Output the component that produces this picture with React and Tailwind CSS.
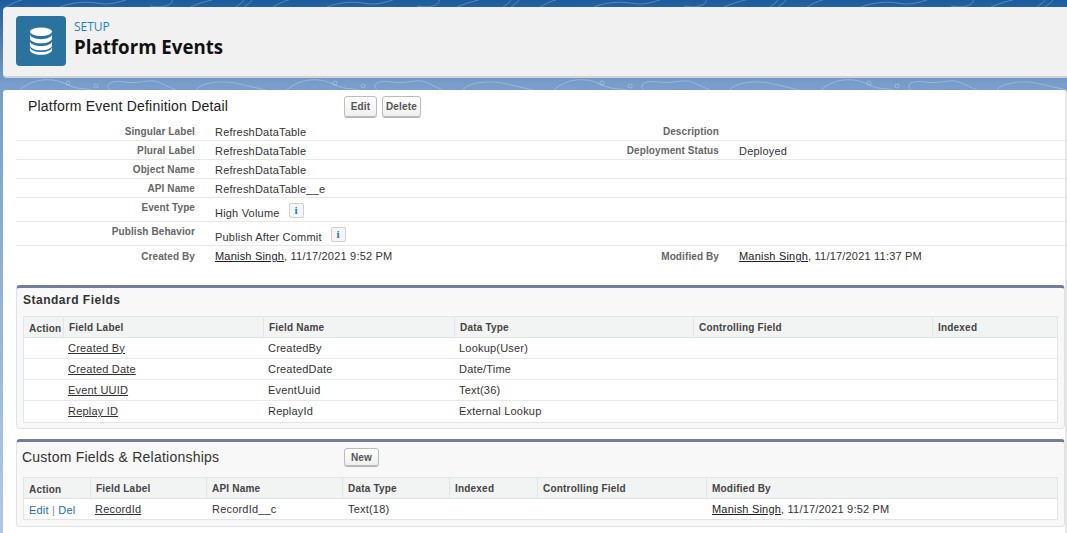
const detailRows = [
  { h: "h-[19px]", label: "Singular Label", value: "RefreshDataTable", label2: "Description" },
  { h: "h-[19px]", label: "Plural Label", value: "RefreshDataTable", label2: "Deployment Status", value2: "Deployed" },
  { h: "h-[19px]", label: "Object Name", value: "RefreshDataTable" },
  { h: "h-[19px]", label: "API Name", value: "RefreshDataTable__e" },
  { h: "h-[24px]", label: "Event Type", value: "High Volume", info: true },
  { h: "h-[24px]", label: "Publish Behavior", value: "Publish After Commit", info: true },
];

const detailCols = "grid-cols-[179px_20px_280px_224px_20px_1fr]";
const standardCols = "grid-cols-[40px_200px_191px_239px_239px_1fr]";
const customCols = "grid-cols-[67px_116px_136px_107px_88px_169px_1fr]";

const standardHead = ["Action", "Field Label", "Field Name", "Data Type", "Controlling Field", "Indexed"];
const standardRows = [
  ["Created By", "CreatedBy", "Lookup(User)"],
  ["Created Date", "CreatedDate", "Date/Time"],
  ["Event UUID", "EventUuid", "Text(36)"],
  ["Replay ID", "ReplayId", "External Lookup"],
];
const customHead = ["Action", "Field Label", "API Name", "Data Type", "Indexed", "Controlling Field", "Modified By"];

function Topo({ className }) {
  return (
    <svg className={className} viewBox="0 0 1067 100" fill="none" stroke="#fff" strokeOpacity="0.25" strokeWidth="1">
      {[0, 267, 534, 801].map((x) => (
        <g key={x} transform={`translate(${x} 0)`}>
          <path d="M20 90c10-10 30-14 46-6s20 2 30 8" />
          <path d="M60 7c10-4 24-6 36-4s16 1 30-3" />
          <circle cx="68" cy="83" r="2" />
          <path d="M110 90c-6-6 2-10 14-8s24-2 30-1 10 4 22 9" />
          <path d="M190 7c8-3 12-5 22-7" />
          <path d="M196 90c2-4 12-8 26-8s20 3 44 8" />
          <path d="M150 6c6 1 14 2 20-2 3-2 2-3 2-4" />
          <circle cx="96" cy="86" r="2" />
          <path d="M6 7c6-3 8-5 16-7" />
          <path d="M236 7c4-3 6-4 8-7M244 7c4-3 6-4 8-7" />
        </g>
      ))}
    </svg>
  );
}

function Btn({ children, className = "" }) {
  return (
    <button
      type="button"
      className={`rounded-[3px] border border-[#bcbcbc] bg-gradient-to-b from-white to-[#efefef] pt-[2px] text-[10px] font-bold leading-none tracking-[0.2px] text-[#555] shadow-[0_1px_0_#b5b5b5] ${className}`}
    >
      {children}
    </button>
  );
}

function Info() {
  return (
    <span className="inline-flex h-[15px] w-[15px] items-center justify-center rounded-[2px] border border-[#d0d0d0] bg-[#f6f6f6] font-['Liberation_Serif',serif] text-[11px] font-bold leading-none text-[#1a73d9]">
      i
    </span>
  );
}

function Person({ children }) {
  return (
    <>
      <a className="text-[#222] underline">Manish Singh</a>
      {children}
    </>
  );
}

function Cell({ children, className = "pl-[5px]" }) {
  return <div className={`truncate ${className}`}>{children}</div>;
}

function HeadRow({ cols, items }) {
  return (
    <div className={`grid h-[21px] items-center border-b border-[#dfe3e3] bg-[#f2f3f3] text-[10px] font-bold tracking-[0.2px] text-[#444] ${cols}`}>
      {items.map((t, i) => (
        <div
          key={t}
          className={`flex h-full items-center pl-[5px] ${i === 0 ? "pt-[2px]" : ""} ${i < items.length - 1 ? "border-r border-[#e3e6e6]" : ""}`}
        >
          {t}
        </div>
      ))}
    </div>
  );
}

function Section({ className = "", children }) {
  return (
    <section className={`ml-[13px] rounded-[4px] border border-t-[3px] border-[#e0e3e5] border-t-[#747e96] bg-[#f8f8f8] ${className}`}>
      {children}
    </section>
  );
}

export default function App() {
  return (
    <div className="relative h-[533px] w-[1067px] overflow-hidden bg-gradient-to-b from-[#1b5c9e] via-[#7a9ecb] via-[16%] to-[#b0c9e6] font-['Liberation_Sans',Arial,sans-serif] tracking-[0.2px] text-[#222]">
      <Topo className="absolute left-0 top-0 h-[100px] w-[1067px]" />

      <div className="relative pl-[3px] pt-[7px]">
        <div className="flex h-[71px] items-start rounded-l-[4px] border-b-2 border-[#d2d2d2] bg-[#f1f1f1] pl-[13px] pt-[9px]">
          <div className="flex h-[50px] w-[50px] items-center justify-center rounded-[4px] bg-[#2a739f]">
            <svg width="24" height="28" viewBox="0 0 26 30" fill="#fff">
              <ellipse cx="13" cy="5" rx="12" ry="4.5" />
              <path d="M1 8c1 3 6 5 12 5s11-2 12-5v4c0 3-5 5.500-12 5.500S1 15 1 12z" />
              <path d="M1 15.500c1 3 6 5 12 5s11-2 12-5v4c0 3-5 5.500-12 5.500S1 22.500 1 19.500z" />
              <path d="M1 22c1 3 6 5 12 5s11-2 12-5v2.500C25 27.500 20 30 13 30S1 27.500 1 24.500z" />
            </svg>
          </div>
          <div className="ml-[8px] flex flex-col font-['Open_Sans',sans-serif] tracking-normal">
            <div className="pt-[2px] text-[12px] leading-[18px] text-[#1f7fd0]">SETUP</div>
            <div className="-mt-[1px] text-[18.7px] font-bold leading-[24px] text-[#111]">Platform Events</div>
          </div>
        </div>
      </div>

      <div className="relative ml-[3px] mt-[12px] h-[443px] rounded-t-[3px] border-r-[2px] border-[#e6e6e6] bg-white">
        <div className="flex h-[32px] items-center pl-[25px]">
          <h2 className="w-[316px] text-[14px] font-normal tracking-[0.2px] text-[#222]">Platform Event Definition Detail</h2>
          <Btn className="h-[21px] w-[33px]">Edit</Btn>
          <Btn className="ml-[5px] h-[21px] w-[39px]">Delete</Btn>
        </div>

        <div className="ml-[13px] text-[11px] text-[#333]">
          {detailRows.map((r) => (
            <div key={r.label} className={`grid border-b border-[#e8e8e8] ${detailCols} ${r.h}`}>
              <div className="pt-[2px] text-right text-[10px] font-bold tracking-[0.1px] text-[#666]">{r.label}</div>
              <div />
              <div className={`flex items-start ${r.info ? "pt-[7px]" : "pt-[2px]"}`}>
                <span>{r.value}</span>
                {r.info && <span className="-mt-[3px] ml-[9px]"><Info /></span>}
              </div>
              <div className="pt-[2px] text-right text-[10px] font-bold tracking-[0.1px] text-[#666]">{r.label2}</div>
              <div />
              <div className="pt-[2px]">{r.value2}</div>
            </div>
          ))}
          <div className={`grid h-[39px] ${detailCols}`}>
            <div className="pt-[3px] text-right text-[10px] font-bold tracking-[0.1px] text-[#666]">Created By</div>
            <div />
            <div className="whitespace-nowrap pt-[2px]"><Person>, 11/17/2021 9:52 PM</Person></div>
            <div className="pt-[3px] text-right text-[10px] font-bold tracking-[0.1px] text-[#666]">Modified By</div>
            <div />
            <div className="pt-[2px]"><Person>, 11/17/2021 11:37 PM</Person></div>
          </div>
        </div>

        <Section className="h-[144px]">
          <h3 className="pl-[6px] pt-[4px] text-[12px] font-bold leading-[17px] tracking-[0.5px] text-[#333]">Standard Fields</h3>
          <div className="mx-[6px] mt-[7px] border border-[#e3e6e6] bg-white text-[11px] text-[#333]">
            <HeadRow cols={standardCols} items={standardHead} />
            {standardRows.map((r, i) => (
              <div key={r[0]} className={`grid h-[21px] items-center ${standardCols} ${i < 3 ? "border-b border-[#e8e8e8]" : ""}`}>
                <div />
                <Cell className="pl-[4px]"><a className="underline">{r[0]}</a></Cell>
                <Cell className="pl-[4px]">{r[1]}</Cell>
                <Cell className="pl-[4px]">{r[2]}</Cell>
              </div>
            ))}
          </div>
        </Section>

        <Section className="mt-[10px] h-[88px]">
          <div className="flex h-[24px] items-end pl-[5px]">
            <h3 className="w-[322px] translate-y-[1px] text-[14px] font-normal leading-[20px] tracking-[0.23px] text-[#333]">Custom Fields &amp; Relationships</h3>
            <Btn className="h-[18px] w-[35px]">New</Btn>
          </div>
          <div className="mx-[6px] mt-[11px] border border-[#e3e6e6] bg-white text-[11px] text-[#333]">
            <HeadRow cols={customCols} items={customHead} />
            <div className={`grid h-[20px] items-center ${customCols}`}>
              <Cell className="pl-[5px] pt-[2px]">
                <a className="text-[#1b6fb5]">Edit</a> <span className="text-[#888]">|</span> <a className="text-[#1b6fb5]">Del</a>
              </Cell>
              <Cell className="pl-[4px]"><a className="underline">RecordId</a></Cell>
              <Cell>RecordId__c</Cell>
              <Cell>Text(18)</Cell>
              <div />
              <div />
              <Cell><Person>, 11/17/2021 9:52 PM</Person></Cell>
            </div>
          </div>
        </Section>
      </div>
    </div>
  );
}
